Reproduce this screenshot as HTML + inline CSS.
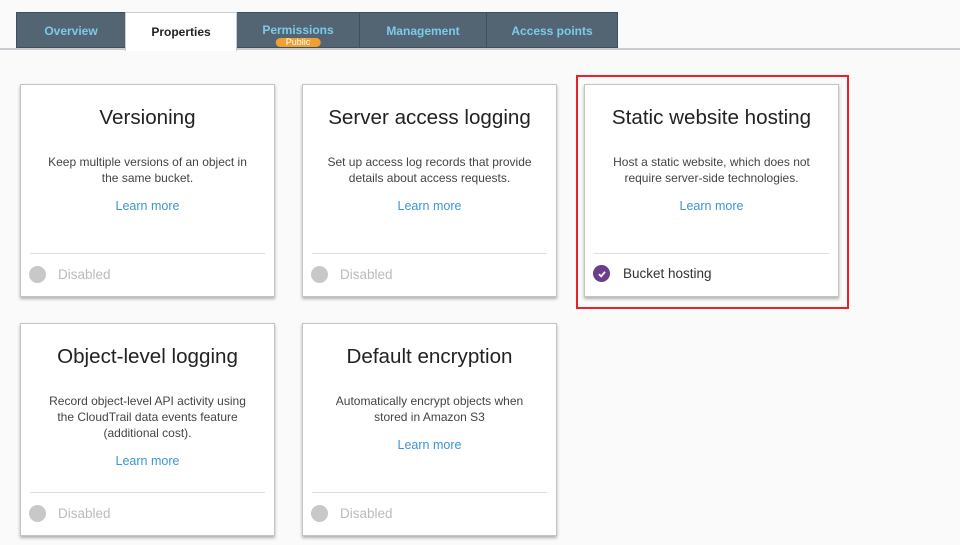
<!DOCTYPE html>
<html><head><meta charset="utf-8"><style>
body{margin:0;width:960px;height:545px;background:#fafafa;font-family:"Liberation Sans",sans-serif;position:relative;overflow:hidden}
.tabs{position:absolute;left:16px;top:12px;height:37px}
.tab{position:absolute;top:0;height:36px;background:#536573;color:#7ccbe8;font-weight:bold;font-size:12px;text-align:center;line-height:36px;box-sizing:border-box;border:1px solid #3f4f5b}
.line{position:absolute;left:0;top:48px;width:960px;height:2px;background:#c8ccd0}
.tab.act{background:#fff;color:#222;height:39px;border:1px solid #c8ccd0;border-bottom:none;line-height:38px;z-index:2}
.pub{position:absolute;left:50%;top:25px;transform:translateX(-50%);background:#f0a030;color:#fff;font-size:9px;line-height:9px;font-weight:normal;padding:0 10px;border-radius:5px}
.card{position:absolute;width:255px;height:213px;background:#fff;border:1px solid #c4c4c4;box-shadow:0 2px 3px rgba(0,0,0,.3);box-sizing:border-box;text-align:center;color:#333}
.card h2{margin:0;position:absolute;top:21px;left:0;right:0;font-weight:normal;font-size:20.6px;color:#222}
.card p{position:absolute;top:69px;left:20px;right:20px;margin:0;font-size:12px;line-height:16px;color:#444}
.card a{position:absolute;left:0;right:0;font-size:12.5px;color:#3c95d6;text-decoration:none}
.card hr{position:absolute;left:9px;right:9px;top:168px;margin:0;border:none;border-top:1px solid #ddd}
.st{position:absolute;left:8px;top:181px;font-size:13.5px;color:#bbb;display:flex;align-items:center}
.dot{width:17px;height:17px;border-radius:50%;background:#c8c8c8;margin-right:12px}
.red{position:absolute;left:576px;top:75px;width:273px;height:234px;border:2px solid #e8202a;box-sizing:border-box}
</style></head><body>
<div class="line"></div>
<div class="tabs">
<div class="tab" style="left:0;width:110px">Overview</div>
<div class="tab act" style="left:109px;width:112px">Properties</div>
<div class="tab" style="left:220px;width:124px;line-height:34px">Permissions<span class="pub">Public</span></div>
<div class="tab" style="left:343px;width:128px">Management</div>
<div class="tab" style="left:470px;width:132px">Access points</div>
</div>

<div class="card" style="left:20px;top:84px"><h2>Versioning</h2><p>Keep multiple versions of an object in the same bucket.</p><a style="top:114px">Learn more</a><hr><div class="st"><span class="dot"></span>Disabled</div></div>
<div class="card" style="left:302px;top:84px"><h2>Server access logging</h2><p>Set up access log records that provide details about access requests.</p><a style="top:114px">Learn more</a><hr><div class="st"><span class="dot"></span>Disabled</div></div>
<div class="card" style="left:584px;top:84px"><h2>Static website hosting</h2><p>Host a static website, which does not require server-side technologies.</p><a style="top:114px">Learn more</a><hr><div class="st" style="color:#333;top:180px;font-size:13.5px"><span class="dot" style="background:#6b3d8c;display:flex;align-items:center;justify-content:center;margin-right:13px"><svg width="10" height="10" viewBox="0 0 10 10"><path d="M2 5.2L4.2 7.3L8 2.8" stroke="#fff" stroke-width="1.8" fill="none"/></svg></span>Bucket hosting</div></div>
<div class="card" style="left:20px;top:323px"><h2>Object-level logging</h2><p>Record object-level API activity using the CloudTrail data events feature (additional cost).</p><a style="top:130px">Learn more</a><hr><div class="st"><span class="dot"></span>Disabled</div></div>
<div class="card" style="left:302px;top:323px"><h2>Default encryption</h2><p>Automatically encrypt objects when stored in Amazon S3</p><a style="top:114px">Learn more</a><hr><div class="st"><span class="dot"></span>Disabled</div></div>
<div class="red"></div>
</body></html>
